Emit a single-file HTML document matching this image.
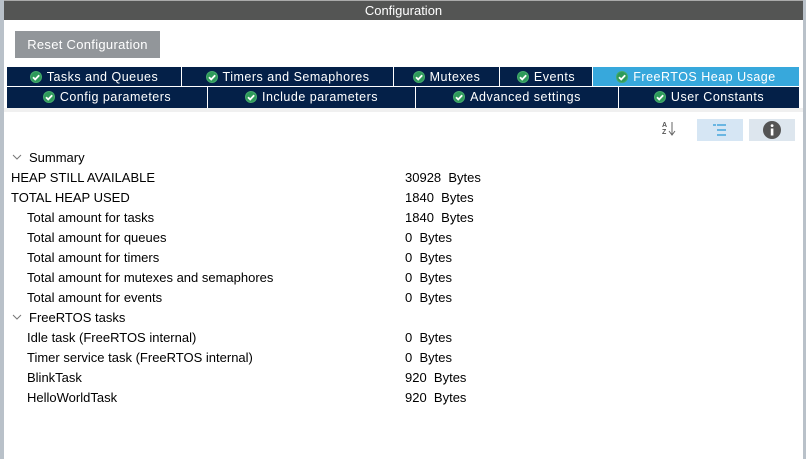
<html><head><style>
body{margin:0;width:806px;height:459px;background:#fff;position:relative;overflow:hidden;font-family:"Liberation Sans",sans-serif;}
.a{position:absolute}
.t{position:absolute;height:19px;background:#042048;color:#fff;font-size:12.5px;line-height:21px;text-align:center;letter-spacing:0.5px;box-sizing:border-box}
.t svg{vertical-align:-2px;margin-right:5px}
.r{position:absolute;font-size:13px;color:#000;line-height:16px;white-space:nowrap}
</style></head><body>
<div class="a" style="left:0;top:0;width:4px;height:459px;background:#b9c1c9"></div>
<div class="a" style="left:803px;top:0;width:3px;height:459px;background:#b9c1c9"></div>
<div class="a" style="left:4px;top:0;width:799px;height:1px;background:#aaa"></div>
<div class="a" style="left:4px;top:1px;width:799px;height:19px;background:#545554;color:#fff;font-size:13px;line-height:19px;text-align:center">Configuration</div>
<div class="a" style="left:15px;top:31px;width:145px;height:27px;background:#92969a;color:#fff;font-size:13px;line-height:27px;text-align:center;letter-spacing:0.3px">Reset Configuration</div>
<svg width="0" height="0" style="position:absolute"><defs><g id="c"><circle cx="6" cy="6" r="6" fill="#44aa6c"/><circle cx="6" cy="6" r="5" fill="#2e9a5a"/><path d="M3 6.2l2.2 2.2 4-4.2" stroke="#fff" stroke-width="1.8" fill="none"/></g></defs></svg>
<div class="t" style="left:7px;top:67px;width:174px"><svg width="12" height="12"><use href="#c"/></svg>Tasks and Queues</div>
<div class="t" style="left:182px;top:67px;width:211px"><svg width="12" height="12"><use href="#c"/></svg>Timers and Semaphores</div>
<div class="t" style="left:394px;top:67px;width:105px"><svg width="12" height="12"><use href="#c"/></svg>Mutexes</div>
<div class="t" style="left:500px;top:67px;width:92px"><svg width="12" height="12"><use href="#c"/></svg>Events</div>
<div class="t" style="left:593px;top:67px;width:206px;background:#37a8dc"><svg width="12" height="12"><use href="#c"/></svg>FreeRTOS Heap Usage</div>
<div class="t" style="left:7px;top:87px;width:200px;height:21px;line-height:21px"><svg width="12" height="12"><use href="#c"/></svg>Config parameters</div>
<div class="t" style="left:208px;top:87px;width:207px;height:21px;line-height:21px"><svg width="12" height="12"><use href="#c"/></svg>Include parameters</div>
<div class="t" style="left:416px;top:87px;width:202px;height:21px;line-height:21px"><svg width="12" height="12"><use href="#c"/></svg>Advanced settings</div>
<div class="t" style="left:619px;top:87px;width:180px;height:21px;line-height:21px"><svg width="12" height="12"><use href="#c"/></svg>User Constants</div>
<div class="a" style="left:4px;top:108px;width:799px;height:4px;background:#f0f0f0"></div>
<div class="a" style="left:662px;top:122px;font-size:7px;line-height:7px;color:#555;font-weight:bold">A<br>Z</div>
<svg class="a" style="left:668px;top:121px" width="8" height="16"><path d="M4 1v13M1 10l3 4 3-4" stroke="#666" fill="none"/></svg>
<div class="a" style="left:697px;top:119px;width:46px;height:22px;background:#d6e6f4"></div>
<svg class="a" style="left:712px;top:123px" width="16" height="14"><path d="M1 2h3M5 2h9M5 7h9M5 12h9" stroke="#2a9ad6" stroke-width="1.3"/></svg>
<div class="a" style="left:749px;top:119px;width:46px;height:22px;background:#dde6ee"></div>
<svg class="a" style="left:763px;top:121px" width="18" height="18"><circle cx="9" cy="9" r="9" fill="#555"/><rect x="7.8" y="7.5" width="2.6" height="7" fill="#fff"/><circle cx="9.1" cy="4.6" r="1.4" fill="#fff"/></svg>
<svg class="a" style="left:12px;top:154px" width="10" height="8"><path d="M1 1l4 4 4-4" stroke="#777" fill="none"/></svg>
<div class="r" style="left:29px;top:150px">Summary</div>
<div class="r" style="left:11px;top:170px">HEAP STILL AVAILABLE</div><div class="r" style="left:405px;top:170px">30928&nbsp; Bytes</div>
<div class="r" style="left:11px;top:190px">TOTAL HEAP USED</div><div class="r" style="left:405px;top:190px">1840&nbsp; Bytes</div>
<div class="r" style="left:27px;top:210px">Total amount for tasks</div><div class="r" style="left:405px;top:210px">1840&nbsp; Bytes</div>
<div class="r" style="left:27px;top:230px">Total amount for queues</div><div class="r" style="left:405px;top:230px">0&nbsp; Bytes</div>
<div class="r" style="left:27px;top:250px">Total amount for timers</div><div class="r" style="left:405px;top:250px">0&nbsp; Bytes</div>
<div class="r" style="left:27px;top:270px">Total amount for mutexes and semaphores</div><div class="r" style="left:405px;top:270px">0&nbsp; Bytes</div>
<div class="r" style="left:27px;top:290px">Total amount for events</div><div class="r" style="left:405px;top:290px">0&nbsp; Bytes</div>
<svg class="a" style="left:12px;top:314px" width="10" height="8"><path d="M1 1l4 4 4-4" stroke="#777" fill="none"/></svg>
<div class="r" style="left:29px;top:310px">FreeRTOS tasks</div>
<div class="r" style="left:27px;top:330px">Idle task (FreeRTOS internal)</div><div class="r" style="left:405px;top:330px">0&nbsp; Bytes</div>
<div class="r" style="left:27px;top:350px">Timer service task (FreeRTOS internal)</div><div class="r" style="left:405px;top:350px">0&nbsp; Bytes</div>
<div class="r" style="left:27px;top:370px">BlinkTask</div><div class="r" style="left:405px;top:370px">920&nbsp; Bytes</div>
<div class="r" style="left:27px;top:390px">HelloWorldTask</div><div class="r" style="left:405px;top:390px">920&nbsp; Bytes</div>
</body></html>
